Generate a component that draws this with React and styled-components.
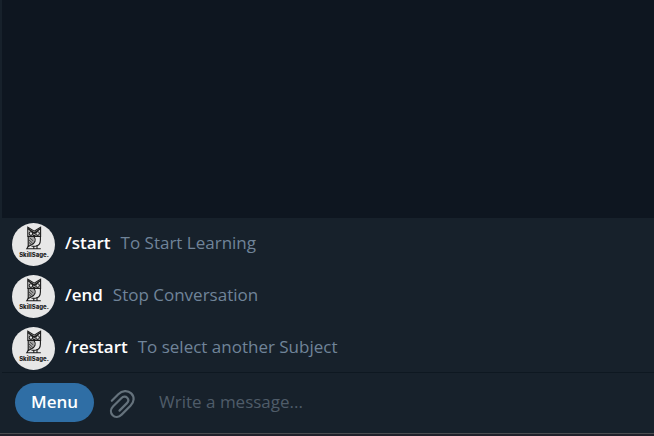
import React from 'react';
import styled, { createGlobalStyle } from 'styled-components';

const COLORS = {
  chat: '#0e1620',
  panel: '#17212b',
  divider: '#0e1821',
  accent: '#2f6ea5',
  white: '#ffffff',
  muted: '#708499',
  placeholder: '#4f5c69',
  icon: '#65727c',
  logo: '#e7e7e7',
  ink: '#1c1c1c',
};

const COMMANDS = [
  { name: '/start', description: 'To Start Learning' },
  { name: '/end', description: 'Stop Conversation' },
  { name: '/restart', description: 'To select another Subject' },
];

const OwlLogo = () => (
  <Avatar viewBox="0 0 43 43" aria-hidden="true">
    <circle cx="21.5" cy="21.5" r="21.5" fill={COLORS.logo} />
    <path d="M16 14 V23 C20 22 23 19 22 14 Z" fill="#a4a4a4" />
    <g fill="none" stroke={COLORS.ink} strokeWidth="1.1">
      <path d="M15.8 4.2 L22.2 8.2 L28.6 4.2 V13.4 H15.8 Z" />
      <path d="M15.8 5.5 L22.2 10.2 L28.6 5.5" strokeWidth="1.5" />
      <circle cx="18.9" cy="10.6" r="1.8" />
      <circle cx="25.6" cy="10.6" r="1.8" />
      <path d="M21 11.5 L22.2 13.6 L23.4 11.5" />
      <path d="M16.2 13.5 V23.5 L19.5 21.8 C23.2 19.8 24.2 17 22.2 13.8" />
      <path d="M28.4 13.5 V17 C28.4 20.5 26.5 22.8 23.5 23.2 H19.5" />
      <path d="M17.8 15 L21.4 18 M17 17 L20.4 20 M17 19.5 L19 21.2" strokeWidth="0.7" />
      <path d="M16.4 23 L14.8 25.7 H28.8 M21.8 23 V25.4 M25 22.5 V25.4" />
    </g>
    <text
      x="22"
      y="34"
      textAnchor="middle"
      fill={COLORS.ink}
      fontFamily="Inter, sans-serif"
      fontWeight="800"
      fontSize="6"
    >
      SkillSage.
    </text>
  </Avatar>
);

const PaperclipIcon = () => (
  <svg width="28" height="30" viewBox="0 0 28 30" fill="none" aria-hidden="true">
    <path
      d="M2.8 11.8 L9.3 5.3 C13.2 1.4 18.7 1 22.2 4.4 C25.8 7.9 25.2 13 21.5 16.7 L12.6 25.6 C9.8 28.4 6 28.6 3.6 26.2 C1.2 23.8 1.4 20.1 4.2 17.3 L12.3 9.2 C14.2 7.3 16.6 7.1 18.2 8.7 C19.8 10.3 19.5 12.6 17.7 14.4 L10.5 21.6"
      stroke={COLORS.icon}
      strokeWidth="2.2"
      strokeLinecap="round"
      strokeLinejoin="round"
    />
  </svg>
);

const App = () => {
  return (
    <>
      <GlobalStyle />
      <Window>
        <History />
        <CommandList>
          {COMMANDS.map(({ name, description }) => (
            <li key={name}>
              <Command type="button">
                <OwlLogo />
                <CommandName>{name}</CommandName>
                <Description>{description}</Description>
              </Command>
            </li>
          ))}
        </CommandList>
        <Composer>
          <MenuButton type="button">Menu</MenuButton>
          <AttachButton type="button" aria-label="Attach file">
            <PaperclipIcon />
          </AttachButton>
          <MessageInput aria-label="Message" placeholder="Write a message..." />
        </Composer>
      </Window>
      <BottomEdge />
    </>
  );
};

const GlobalStyle = createGlobalStyle`
  *, *::before, *::after {
    box-sizing: border-box;
  }

  body {
    margin: 0;
    background: ${COLORS.chat};
    font-family: 'Open Sans', sans-serif;
    font-size: 17px;
    line-height: 24px;
  }

  #root {
    display: flex;
    flex-direction: column;
    min-height: 100vh;
  }

  button, input {
    font: inherit;
    border: none;
    padding: 0;
    background: none;
  }

  button {
    cursor: pointer;
  }
`

const Window = styled.main`
  flex: 1;
  display: flex;
  flex-direction: column;
  border-left: 2px solid ${COLORS.panel};
`

const History = styled.section`
  flex: 1;
`

const CommandList = styled.ul`
  display: flex;
  flex-direction: column;
  gap: 9px;
  margin: 0;
  padding: 5px 10px 2px;
  list-style: none;
  background: ${COLORS.panel};
`

const Command = styled.button`
  display: flex;
  align-items: center;
  width: 100%;
  gap: 10px;
  text-align: left;
`

const Avatar = styled.svg`
  flex: none;
  width: 43px;
  height: 43px;
`

const CommandName = styled.span`
  padding-bottom: 4px;
  color: ${COLORS.white};
  font-weight: 600;
`

const Description = styled.span`
  padding-bottom: 4px;
  color: ${COLORS.muted};
`

const Composer = styled.form`
  display: flex;
  align-items: center;
  height: 61px;
  padding: 0 13px 2px;
  border-top: 1px solid ${COLORS.divider};
  background: ${COLORS.panel};
`

const MenuButton = styled.button`
  height: 39px;
  padding: 0 16px;
  border-radius: 20px;
  background: ${COLORS.accent};
  color: ${COLORS.white};
  font-weight: 600;
`

const AttachButton = styled.button`
  display: flex;
  margin: 0 22px 0 15px;
  padding-top: 4px;
`

const MessageInput = styled.input`
  flex: 1;
  min-width: 0;
  color: ${COLORS.white};
  outline: none;

  &::placeholder {
    color: ${COLORS.placeholder};
    opacity: 1;
  }
`

const BottomEdge = styled.footer`
  height: 3px;
  border-top: 1px solid #4a4d50;
  background: #20202a;
`

export default App;
